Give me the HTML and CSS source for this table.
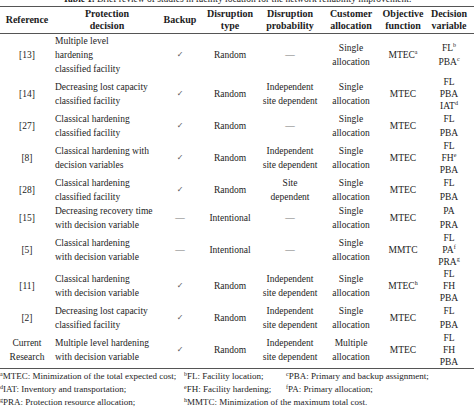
FILE: index.html
```html
<!DOCTYPE html>
<html lang="en">
<head>
<meta charset="utf-8">
<title>Table 1</title>
<link rel="stylesheet" href="styles.css">
</head>
<body>
<p class="caption"><b>Table 1.</b> Brief review of studies in facility location for the network reliability improvement.</p>
<table class="review">
  <colgroup>
    <col class="c-ref"><col class="c-prot"><col class="c-back"><col class="c-type"><col class="c-prob"><col class="c-cust"><col class="c-obj"><col class="c-dv">
  </colgroup>
  <thead>
    <tr>
      <th>Reference</th>
      <th>Protection<br>decision</th>
      <th>Backup</th>
      <th>Disruption<br>type</th>
      <th>Disruption<br>probability</th>
      <th>Customer<br>allocation</th>
      <th>Objective<br>function</th>
      <th>Decision<br>variable</th>
    </tr>
  </thead>
  <tbody>
    <tr>
      <td>[13]</td>
      <td class="prot">Multiple level<br>hardening<br>classified facility</td>
      <td class="chk">✓</td>
      <td>Random</td>
      <td class="dash">—</td>
      <td>Single<br>allocation</td>
      <td>MTEC<sup>a</sup></td>
      <td class="dv two">FL<sup>b</sup><br>PBA<sup>c</sup></td>
    </tr>
    <tr>
      <td>[14]</td>
      <td class="prot">Decreasing lost capacity<br>classified facility</td>
      <td class="chk">✓</td>
      <td>Random</td>
      <td>Independent<br>site dependent</td>
      <td>Single<br>allocation</td>
      <td>MTEC</td>
      <td class="dv">FL<br>PBA<br>IAT<sup>d</sup></td>
    </tr>
    <tr>
      <td>[27]</td>
      <td class="prot">Classical hardening<br>classified facility</td>
      <td class="chk">✓</td>
      <td>Random</td>
      <td class="dash">—</td>
      <td>Single<br>allocation</td>
      <td>MTEC</td>
      <td class="dv two">FL<br>PBA</td>
    </tr>
    <tr>
      <td>[8]</td>
      <td class="prot">Classical hardening with<br>decision variables</td>
      <td class="chk">✓</td>
      <td>Random</td>
      <td>Independent<br>site dependent</td>
      <td>Single<br>allocation</td>
      <td>MTEC</td>
      <td class="dv">FL<br>FH<sup>e</sup><br>PBA</td>
    </tr>
    <tr>
      <td>[28]</td>
      <td class="prot">Classical hardening<br>classified facility</td>
      <td class="chk">✓</td>
      <td>Random</td>
      <td>Site<br>dependent</td>
      <td>Single<br>allocation</td>
      <td>MTEC</td>
      <td class="dv two">FL<br>PBA</td>
    </tr>
    <tr>
      <td>[15]</td>
      <td class="prot">Decreasing recovery time<br>with decision variable</td>
      <td class="dash">—</td>
      <td>Intentional</td>
      <td class="dash">—</td>
      <td>Single<br>allocation</td>
      <td>MTEC</td>
      <td class="dv two">PA<br>PRA</td>
    </tr>
    <tr>
      <td>[5]</td>
      <td class="prot">Classical hardening<br>with decision variable</td>
      <td class="dash">—</td>
      <td>Intentional</td>
      <td class="dash">—</td>
      <td>Single<br>allocation</td>
      <td>MMTC</td>
      <td class="dv">FL<br>PA<sup>f</sup><br>PRA<sup>g</sup></td>
    </tr>
    <tr>
      <td>[11]</td>
      <td class="prot">Classical hardening<br>with decision variable</td>
      <td class="chk">✓</td>
      <td>Random</td>
      <td>Independent<br>site dependent</td>
      <td>Single<br>allocation</td>
      <td>MTEC<sup>h</sup></td>
      <td class="dv">FL<br>FH<br>PBA</td>
    </tr>
    <tr>
      <td>[2]</td>
      <td class="prot">Decreasing lost capacity<br>classified facility</td>
      <td class="chk">✓</td>
      <td>Random</td>
      <td>Independent<br>site dependent</td>
      <td>Single<br>allocation</td>
      <td>MTEC</td>
      <td class="dv two">FL<br>PBA</td>
    </tr>
    <tr>
      <td>Current<br>Research</td>
      <td class="prot">Multiple level hardening<br>with decision variable</td>
      <td class="chk">✓</td>
      <td>Random</td>
      <td>Independent<br>site dependent</td>
      <td>Multiple<br>allocation</td>
      <td>MTEC</td>
      <td class="dv">FL<br>FH<br>PBA</td>
    </tr>
  </tbody>
</table>
<div class="notes">
  <span><sup>a</sup>MTEC: Minimization of the total expected cost;</span>
  <span><sup>b</sup>FL: Facility location;</span>
  <span><sup>c</sup>PBA: Primary and backup assignment;</span>
  <span><sup>d</sup>IAT: Inventory and transportation;</span>
  <span><sup>e</sup>FH: Facility hardening;</span>
  <span><sup>f</sup>PA: Primary allocation;</span>
  <span><sup>g</sup>PRA: Protection resource allocation;</span>
  <span class="wide"><sup>h</sup>MMTC: Minimization of the maximum total cost.</span>
</div>
</body>
</html>
```

FILE: styles.css
```css
html, body {
  margin: 0;
  padding: 0;
  background: #ffffff;
}

body {
  width: 474px;
  height: 407px;
  overflow: hidden;
  color: #1c1c1c;
  font-family: "Liberation Serif", "Times New Roman", serif;
  font-size: 9.5px;
}

.caption {
  margin: -7px 0 0;
  height: 13px;
  line-height: 12px;
  text-align: center;
  white-space: nowrap;
}

.review {
  border-collapse: collapse;
  table-layout: fixed;
  width: 474px;
}

.c-ref { width: 54px; }
.c-prot { width: 106px; }
.c-back { width: 40px; }
.c-type { width: 60px; }
.c-prob { width: 60px; }
.c-cust { width: 62px; }
.c-obj { width: 42px; }
.c-dv { width: 50px; }

.review th,
.review td {
  padding: 0;
  text-align: center;
  vertical-align: middle;
  white-space: nowrap;
}

.review thead tr {
  border-top: 1px solid #555;
  border-bottom: 1px solid #555;
}

.review th {
  height: 26px;
  font-size: 10px;
  font-weight: bold;
  line-height: 12.5px;
}

.review td {
  line-height: 14px;
}

.review td.prot {
  text-align: left;
  padding-left: 1px;
}

.review td.dv {
  line-height: 12px;
}

.review td.dv.two {
  line-height: 14px;
}

.review td.chk {
  font-family: "DejaVu Sans", sans-serif;
  font-size: 8px;
  color: #555;
}

.review td.dash {
  color: #777;
}

.review tbody tr:last-child {
  border-bottom: 1px solid #555;
}

sup {
  font-size: 6px;
  line-height: 0;
  vertical-align: 4px;
}

.notes {
  display: grid;
  grid-template-columns: 184px 102px auto;
  margin-top: 1px;
  font-size: 9px;
  line-height: 13px;
  white-space: nowrap;
}

.notes sup {
  vertical-align: 3px;
}

.notes .wide {
  grid-column: 2 / 4;
}
```
